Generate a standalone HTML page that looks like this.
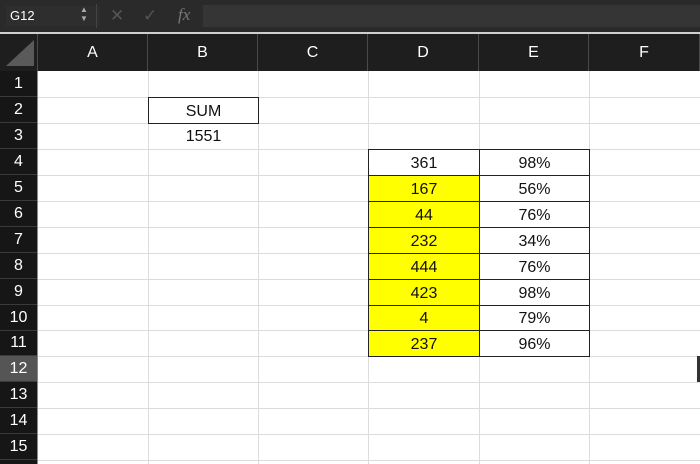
<!DOCTYPE html>
<html><head><style>
*{margin:0;padding:0;box-sizing:border-box}
body{width:700px;height:464px;overflow:hidden;background:#fff;font-family:"Liberation Sans",Arial,sans-serif;position:relative}
.a{position:absolute}
.top{left:0;top:0;width:700px;height:32px;background:#2a2a2a}
.sep{left:0;top:32px;width:700px;height:2px;background:#cfcfcf}
.hdr{left:0;top:34px;width:700px;height:37px;background:#1e1e1e}
.rh{left:0;top:71px;width:38px;height:393px;background:#161616}
.ch{color:#fff;font-size:16px;text-align:center;line-height:37px;top:34px;height:37px;border-right:1px solid #4a4a4a}
.rn{color:#fff;font-size:16px;text-align:center;left:0;width:37px;height:26px;line-height:26px;border-bottom:1px solid #3a3a3a}
.vl{top:71px;width:1px;height:393px;background:#dcdcdc}
.hl{left:38px;width:662px;height:1px;background:#dcdcdc}
.c{font-size:16px;color:#111;text-align:center;height:27px;line-height:27px;border:1px solid #222}
</style></head><body>
<div class="a top"></div>
<div class="a" style="left:6px;top:6px;width:94px;height:20px;background:#2e2e2e"></div>
<div class="a" style="left:10px;top:8px;color:#fff;font-size:13px">G12</div>
<div class="a" style="left:80px;top:5px;color:#aaa;font-size:8px;line-height:9px">▲<br>▼</div>
<div class="a" style="left:96px;top:4px;width:1px;height:24px;background:#444"></div>
<div class="a" style="left:110px;top:6px;color:#555;font-size:17px">✕</div>
<div class="a" style="left:143px;top:6px;color:#555;font-size:17px">✓</div>
<div class="a" style="left:178px;top:5px;color:#777;font-size:17px;font-family:'Liberation Serif',serif;font-style:italic">fx</div>
<div class="a" style="left:203px;top:5px;width:497px;height:22px;background:#353535"></div>
<div class="a sep"></div>
<div class="a hdr"></div>
<svg class="a" style="left:4px;top:38px" width="32" height="30"><polygon points="30,2 30,28 2,28" fill="#5a5a5a"/></svg>
<div class="a ch" style="left:0;width:38px"></div>
<div class="a ch" style="left:38px;width:110px">A</div>
<div class="a ch" style="left:148px;width:110px">B</div>
<div class="a ch" style="left:258px;width:110px">C</div>
<div class="a ch" style="left:368px;width:111px">D</div>
<div class="a ch" style="left:479px;width:110px">E</div>
<div class="a ch" style="left:589px;width:111px">F</div>
<div class="a rh"></div>
<div class="a" style="left:0;top:356px;width:38px;height:26px;background:#555"></div>
<div class="a" style="left:37px;top:71px;width:1px;height:393px;background:#888"></div>
<div class="a rn" style="top:71px">1</div>
<div class="a rn" style="top:97px">2</div>
<div class="a rn" style="top:123px">3</div>
<div class="a rn" style="top:149px">4</div>
<div class="a rn" style="top:175px">5</div>
<div class="a rn" style="top:201px">6</div>
<div class="a rn" style="top:227px">7</div>
<div class="a rn" style="top:253px">8</div>
<div class="a rn" style="top:279px">9</div>
<div class="a rn" style="top:305px">10</div>
<div class="a rn" style="top:330px">11</div>
<div class="a rn" style="top:356px">12</div>
<div class="a rn" style="top:382px">13</div>
<div class="a rn" style="top:408px">14</div>
<div class="a rn" style="top:434px">15</div>
<div class="a vl" style="left:148px"></div>
<div class="a vl" style="left:258px"></div>
<div class="a vl" style="left:368px"></div>
<div class="a vl" style="left:479px"></div>
<div class="a vl" style="left:589px"></div>
<div class="a hl" style="top:97px"></div>
<div class="a hl" style="top:123px"></div>
<div class="a hl" style="top:149px"></div>
<div class="a hl" style="top:175px"></div>
<div class="a hl" style="top:201px"></div>
<div class="a hl" style="top:227px"></div>
<div class="a hl" style="top:253px"></div>
<div class="a hl" style="top:279px"></div>
<div class="a hl" style="top:305px"></div>
<div class="a hl" style="top:330px"></div>
<div class="a hl" style="top:356px"></div>
<div class="a hl" style="top:382px"></div>
<div class="a hl" style="top:408px"></div>
<div class="a hl" style="top:434px"></div>
<div class="a hl" style="top:460px"></div>
<div class="a" style="left:697px;top:356px;width:3px;height:26px;background:#333"></div>
<div class="a c" style="left:148px;top:97px;width:111px">SUM</div>
<div class="a c" style="left:148px;top:123px;width:111px;border:none">1551</div>
<div class="a c" style="left:368px;top:149px;width:112px">361</div><div class="a c" style="left:479px;top:149px;width:111px">98%</div>
<div class="a c" style="left:368px;top:175px;width:112px;background:#ff0">167</div><div class="a c" style="left:479px;top:175px;width:111px">56%</div>
<div class="a c" style="left:368px;top:201px;width:112px;background:#ff0">44</div><div class="a c" style="left:479px;top:201px;width:111px">76%</div>
<div class="a c" style="left:368px;top:227px;width:112px;background:#ff0">232</div><div class="a c" style="left:479px;top:227px;width:111px">34%</div>
<div class="a c" style="left:368px;top:253px;width:112px;background:#ff0">444</div><div class="a c" style="left:479px;top:253px;width:111px">76%</div>
<div class="a c" style="left:368px;top:279px;width:112px;background:#ff0">423</div><div class="a c" style="left:479px;top:279px;width:111px">98%</div>
<div class="a c" style="left:368px;top:305px;width:112px;background:#ff0;height:26px;line-height:25px">4</div><div class="a c" style="left:479px;top:305px;width:111px;height:26px;line-height:25px">79%</div>
<div class="a c" style="left:368px;top:330px;width:112px;background:#ff0">237</div><div class="a c" style="left:479px;top:330px;width:111px">96%</div>
</body></html>
